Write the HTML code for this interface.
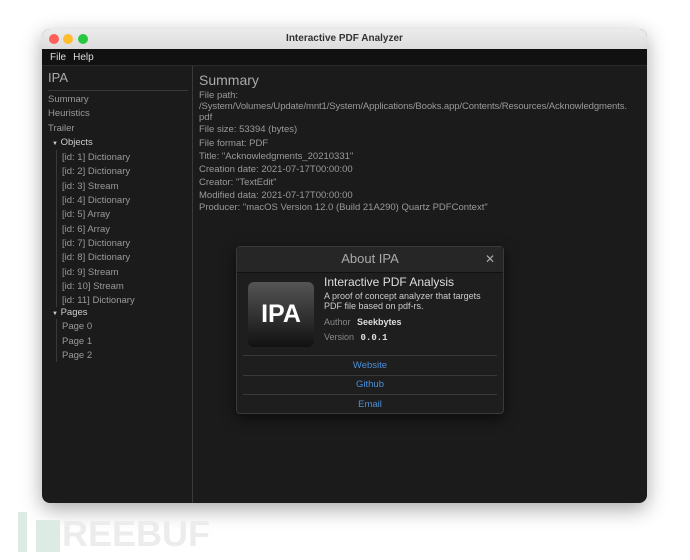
<!DOCTYPE html><html><head><style>
*{margin:0;padding:0;box-sizing:border-box}
body{width:690px;height:560px;background:#fff;font-family:"Liberation Sans","DejaVu Sans",sans-serif;position:relative;overflow:hidden}
.win{position:absolute;left:42px;top:29px;width:605px;height:474px;border-radius:8px;background:#1b1b1b;box-shadow:0 6px 20px rgba(0,0,0,.35);overflow:hidden}
.tb{height:20px;background:linear-gradient(#ececec,#dcdcdc);text-align:center;font:bold 10px "Liberation Sans",sans-serif;color:#333;line-height:20px;position:relative}
.dot{position:absolute;top:5px;width:10px;height:10px;border-radius:50%}
.menu{height:17px;background:#111;color:#ddd;font-size:10px;line-height:17px;padding-left:8px;border-bottom:1px solid #2a2a2a}
.menu span{margin-right:7px}
.side{position:absolute;left:0;top:37px;width:151px;bottom:0;border-right:1px solid #3a3a3a;color:#9a9a9a;font-size:9.5px}
.t{position:absolute;white-space:nowrap}
.main{position:absolute;left:157px;top:37px;color:#9a9a9a;font-size:9.5px}
.dlg{position:absolute;left:236px;top:246px;width:268px;height:168px;background:#1e1e1e;border:1px solid #3a3a3a;border-radius:4px;box-shadow:0 4px 14px rgba(0,0,0,.6)}
</style></head><body>
<div class="win">
<div class="tb"><div class="dot" style="left:7px;background:#fe5f57"></div><div class="dot" style="left:21px;background:#febc2e"></div><div class="dot" style="left:36px;background:#28c840"></div>Interactive PDF Analyzer</div>
<div class="menu"><span>File</span><span>Help</span></div>
<div class="side">
<div class="t" style="left:6px;top:4px;font-size:13px;color:#aaa">IPA</div>
<div style="position:absolute;left:6px;top:24px;width:140px;border-top:1px solid #3a3a3a"></div>
<div class="t" style="left:6px;top:28px">Summary</div>
<div class="t" style="left:6px;top:42px">Heuristics</div>
<div class="t" style="left:6px;top:57px">Trailer</div>
<div class="t" style="left:10px;top:71px;color:#ccc"><span style="font-size:6px">▼</span> Objects</div>
<div style="position:absolute;left:14px;top:84px;height:157px;border-left:1px solid #3a3a3a"></div>
<div class="t" style="left:20px;top:86px">[id: 1] Dictionary</div>
<div class="t" style="left:20px;top:100px">[id: 2] Dictionary</div>
<div class="t" style="left:20px;top:115px">[id: 3] Stream</div>
<div class="t" style="left:20px;top:129px">[id: 4] Dictionary</div>
<div class="t" style="left:20px;top:143px">[id: 5] Array</div>
<div class="t" style="left:20px;top:158px">[id: 6] Array</div>
<div class="t" style="left:20px;top:172px">[id: 7] Dictionary</div>
<div class="t" style="left:20px;top:186px">[id: 8] Dictionary</div>
<div class="t" style="left:20px;top:201px">[id: 9] Stream</div>
<div class="t" style="left:20px;top:215px">[id: 10] Stream</div>
<div class="t" style="left:20px;top:229px">[id: 11] Dictionary</div>
<div class="t" style="left:10px;top:241px;color:#ccc"><span style="font-size:6px">▼</span> Pages</div>
<div style="position:absolute;left:14px;top:253px;height:43px;border-left:1px solid #3a3a3a"></div>
<div class="t" style="left:20px;top:255px">Page 0</div>
<div class="t" style="left:20px;top:270px">Page 1</div>
<div class="t" style="left:20px;top:284px">Page 2</div>
</div>
<div class="main">
<div class="t" style="top:6px;font-size:14px;color:#aaa">Summary</div>
<div class="t" style="top:24px">File path:</div>
<div class="t" style="top:35px;letter-spacing:-0.1px">/System/Volumes/Update/mnt1/System/Applications/Books.app/Contents/Resources/Acknowledgments.</div>
<div class="t" style="top:46px">pdf</div>
<div class="t" style="top:58px">File size: 53394 (bytes)</div>
<div class="t" style="top:72px">File format: PDF</div>
<div class="t" style="top:85px">Title: "Acknowledgments_20210331"</div>
<div class="t" style="top:98px">Creation date: 2021-07-17T00:00:00</div>
<div class="t" style="top:111px">Creator: "TextEdit"</div>
<div class="t" style="top:124px">Modified data: 2021-07-17T00:00:00</div>
<div class="t" style="top:136px">Producer: "macOS Version 12.0 (Build 21A290) Quartz PDFContext"</div>
</div>
</div>
<div class="dlg">
<div style="height:26px;border-bottom:1px solid #111;background:#262626;text-align:center;color:#aaa;font-size:13px;line-height:24px;position:relative">About IPA<span style="position:absolute;right:8px;top:0;font-size:12px;color:#aaa">✕</span></div>
<div style="position:absolute;left:11px;top:35px;width:66px;height:65px;border-radius:6px;background:linear-gradient(#555,#111);color:#fff;font:bold 25px 'Liberation Sans',sans-serif;text-align:center;line-height:65px">IPA</div>
<div class="t" style="left:87px;top:28px;color:#ddd;font-size:12px">Interactive PDF Analysis</div>
<div class="t" style="left:87px;top:44px;color:#ccc;font-size:9px;line-height:10px">A proof of concept analyzer that targets<br>PDF file based on pdf-rs.</div>
<div class="t" style="left:87px;top:70px;color:#888;font-size:9px">Author <b style="color:#ddd;margin-left:4px">Seekbytes</b></div>
<div class="t" style="left:87px;top:85px;color:#888;font-size:9px">Version <b style="color:#ddd;margin-left:4px;font-family:'Liberation Mono',monospace">0.0.1</b></div>
<div style="position:absolute;left:6px;right:6px;top:108px;border-top:1px solid #3a3a3a"></div>
<div style="position:absolute;left:6px;right:6px;top:128px;border-top:1px solid #3a3a3a"></div>
<div style="position:absolute;left:6px;right:6px;top:147px;border-top:1px solid #3a3a3a"></div>
<div class="t" style="left:0;width:100%;text-align:center;top:113px;color:#4a8fd8;font-size:9.5px">Website</div>
<div class="t" style="left:0;width:100%;text-align:center;top:132px;color:#4a8fd8;font-size:9.5px">Github</div>
<div class="t" style="left:0;width:100%;text-align:center;top:152px;color:#4a8fd8;font-size:9.5px">Email</div>
</div>
<div style="position:absolute;left:18px;top:512px;width:9px;height:40px;background:#dcebe4"></div>
<div style="position:absolute;left:36px;top:520px;width:24px;height:32px;background:#dcebe4"></div>
<div class="t" style="left:62px;top:515px;font:bold 36px 'Liberation Sans',sans-serif;color:#ececec;line-height:38px">REEBUF</div>
</body></html>
